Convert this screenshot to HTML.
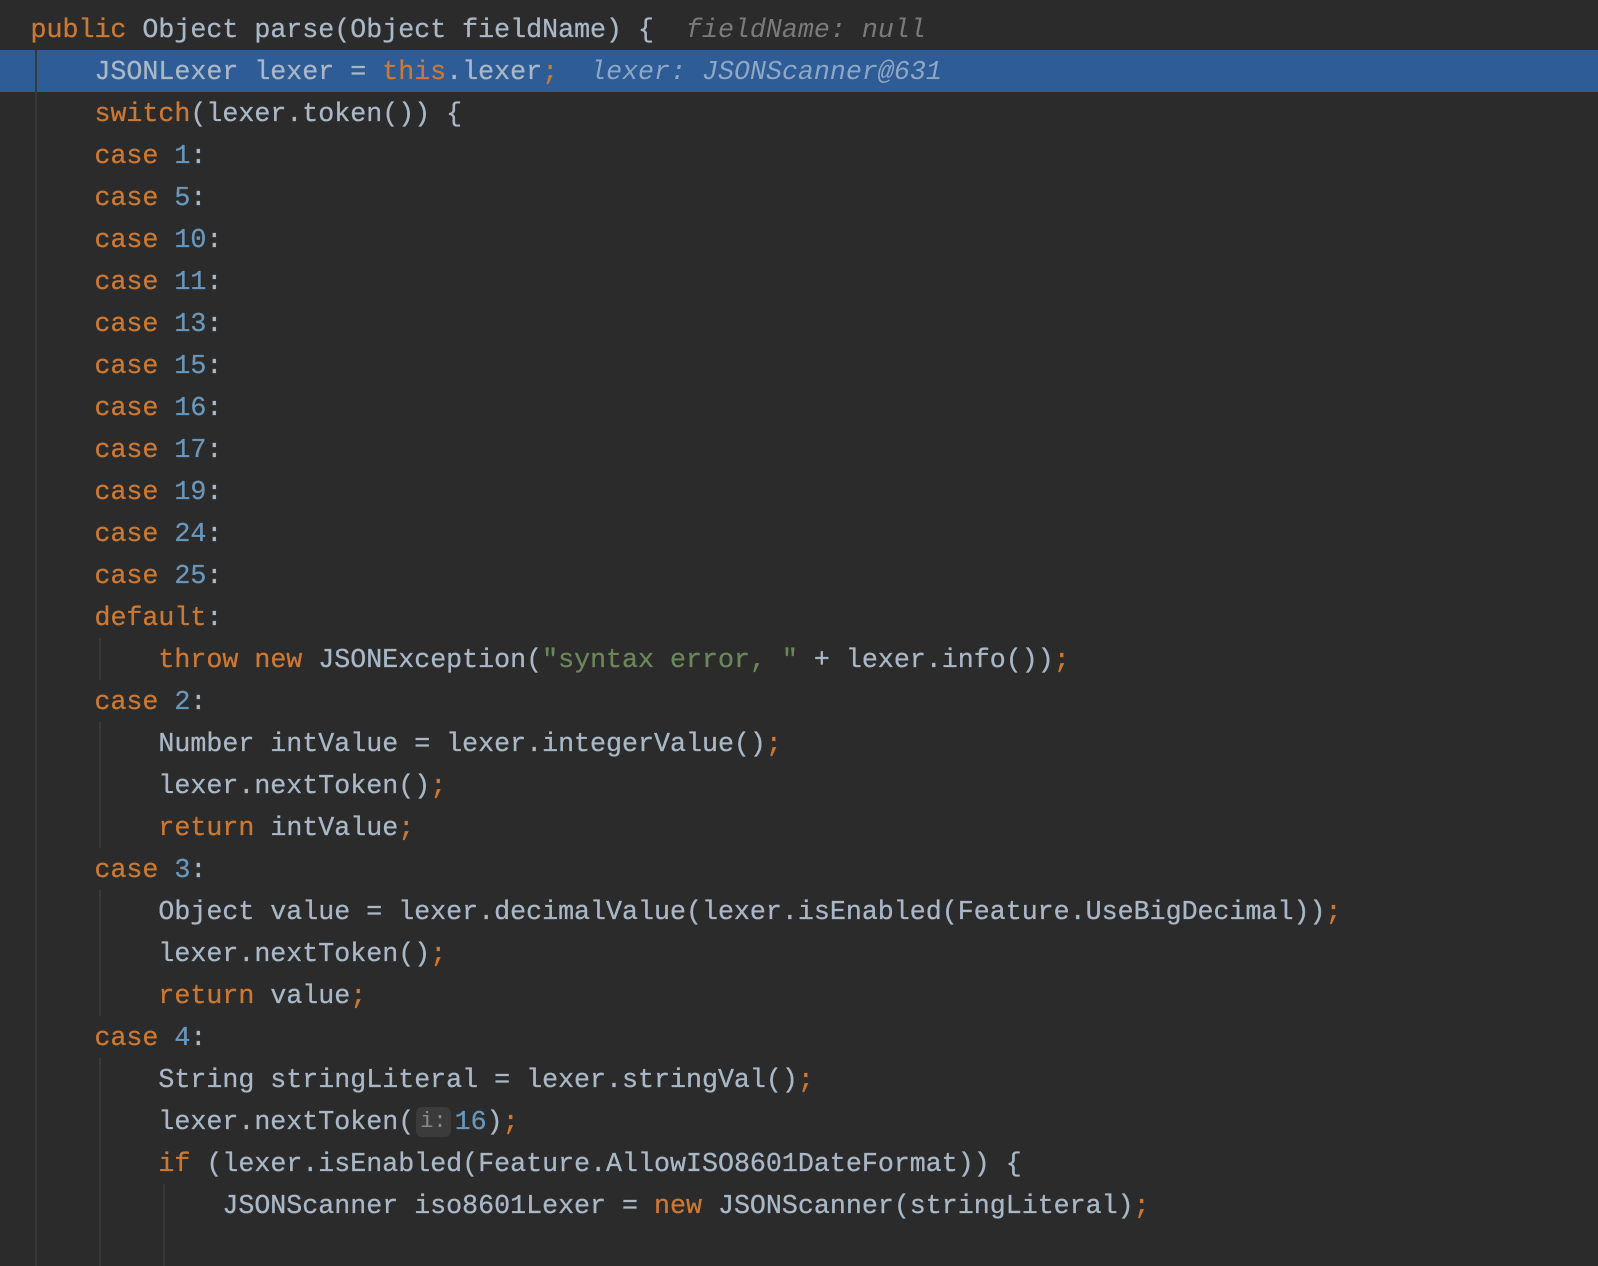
<!DOCTYPE html>
<html><head><meta charset="utf-8"><style>
html,body{margin:0;padding:0;background:#2b2b2b;width:1598px;height:1266px;overflow:hidden}
.hl{position:absolute;left:0;top:50px;width:1598px;height:42px;background:#2d5c96}
.g{position:absolute;width:2px;background:#393939}
pre{position:absolute;left:30.5px;top:9.5px;margin:0;font-family:"Liberation Mono",monospace;font-size:26.65px;line-height:42px;color:#a9b7c6;-webkit-text-stroke:0.3px currentColor}
.k{color:#cc7832}.n{color:#6897bb}.s{color:#6a8759}.h{color:#7a7a7a;font-style:italic;-webkit-text-stroke:0}
.hint{display:inline-block;background:#3b3b3b;color:#8a8a8a;border-radius:6px;font-size:22px;line-height:30px;padding:0 4px;margin:0 4px 0 2px;vertical-align:2px;-webkit-text-stroke:0}
</style></head><body>
<div class="hl"></div>
<div class="g" style="left:35px;top:50px;height:1216px"></div>
<div class="g" style="left:99px;top:638px;height:42px"></div>
<div class="g" style="left:99px;top:722px;height:126px"></div>
<div class="g" style="left:99px;top:890px;height:126px"></div>
<div class="g" style="left:99px;top:1058px;height:208px"></div>
<div class="g" style="left:163px;top:1184px;height:82px"></div>
<pre><span class="k">public</span> Object parse(Object fieldName) {  <span class="h">fieldName: null</span>
    JSONLexer lexer = <span class="k">this</span>.lexer<span class="k">;</span>  <span class="h" style="color:#8fa6c4">lexer: JSONScanner@631</span>
    <span class="k">switch</span>(lexer.token()) {
    <span class="k">case</span> <span class="n">1</span>:
    <span class="k">case</span> <span class="n">5</span>:
    <span class="k">case</span> <span class="n">10</span>:
    <span class="k">case</span> <span class="n">11</span>:
    <span class="k">case</span> <span class="n">13</span>:
    <span class="k">case</span> <span class="n">15</span>:
    <span class="k">case</span> <span class="n">16</span>:
    <span class="k">case</span> <span class="n">17</span>:
    <span class="k">case</span> <span class="n">19</span>:
    <span class="k">case</span> <span class="n">24</span>:
    <span class="k">case</span> <span class="n">25</span>:
    <span class="k">default</span>:
        <span class="k">throw new</span> JSONException(<span class="s">"syntax error, "</span> + lexer.info())<span class="k">;</span>
    <span class="k">case</span> <span class="n">2</span>:
        Number intValue = lexer.integerValue()<span class="k">;</span>
        lexer.nextToken()<span class="k">;</span>
        <span class="k">return</span> intValue<span class="k">;</span>
    <span class="k">case</span> <span class="n">3</span>:
        Object value = lexer.decimalValue(lexer.isEnabled(Feature.UseBigDecimal))<span class="k">;</span>
        lexer.nextToken()<span class="k">;</span>
        <span class="k">return</span> value<span class="k">;</span>
    <span class="k">case</span> <span class="n">4</span>:
        String stringLiteral = lexer.stringVal()<span class="k">;</span>
        lexer.nextToken(<span class="hint">i:</span><span class="n">16</span>)<span class="k">;</span>
        <span class="k">if</span> (lexer.isEnabled(Feature.AllowISO8601DateFormat)) {
            JSONScanner iso8601Lexer = <span class="k">new</span> JSONScanner(stringLiteral)<span class="k">;</span>
</pre>
</body></html>
